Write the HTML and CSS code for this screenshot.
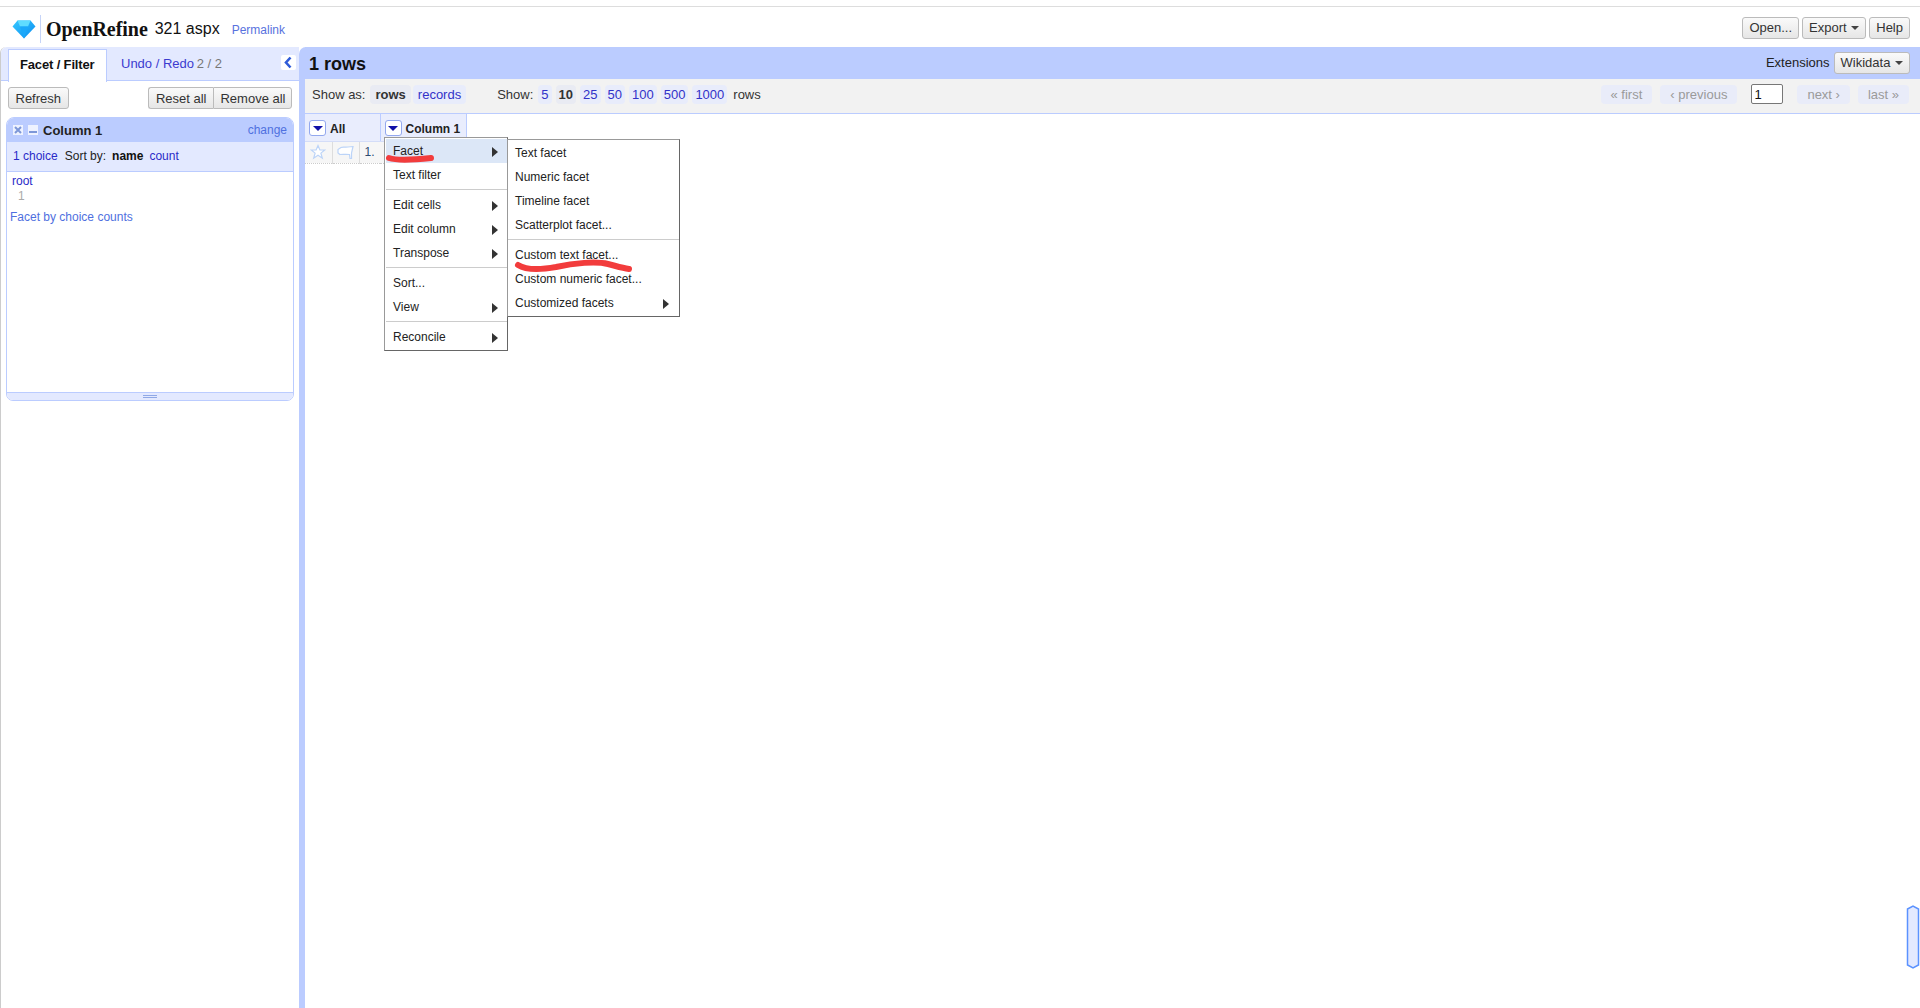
FILE: index.html
```html
<!DOCTYPE html>
<html lang="en">
<head>
<meta charset="utf-8">
<title>321 aspx - OpenRefine</title>
<link rel="stylesheet" href="styles.css">
</head>
<body>
<div class="app">
  <header class="header">
    <svg class="logo" width="24" height="19" viewBox="0 0 24 19"><defs><linearGradient id="gem" x1="0" y1="0" x2="1" y2="1"><stop offset="0" stop-color="#35c8ff"/><stop offset="1" stop-color="#0a8cf0"/></linearGradient></defs><path d="M5.5 0.5H18.5L23.5 6.5L12 18.5L0.5 6.5Z" fill="url(#gem)"/><path d="M5.5 0.5L8 6.5H16L18.5 .5Z" fill="#5fdcff"/><path d="M8 6.5L12 18.5L16 6.5Z" fill="#1ba8fa"/></svg>
    <div class="brand">OpenRefine</div>
    <div class="project">321 aspx</div>
    <a class="permalink">Permalink</a>
    <div class="header-buttons">
      <button class="btn">Open...</button>
      <button class="btn">Export <span class="caret"></span></button>
      <button class="btn">Help</button>
    </div>
  </header>
  <div class="main">
    <aside class="left">
      <div class="tabs">
        <div class="tab active">Facet / Filter</div>
        <div class="tab"><a class="tab-link">Undo / Redo</a> <span class="count">2 / 2</span></div>
        <div class="collapse"><svg width="15" height="15" viewBox="0 0 15 15"><path d="M9.5 2.5L5 7.5L9.5 12.5" fill="none" stroke="#2f5bd8" stroke-width="2.6"/></svg></div>
      </div>
      <div class="toolbar">
        <button class="btn">Refresh</button>
        <div class="btn-group">
          <button class="btn">Reset all</button>
          <button class="btn">Remove all</button>
        </div>
      </div>
      <section class="facet">
        <div class="facet-title">
          <svg class="facet-icon" width="10" height="10" viewBox="0 0 10 10"><rect width="10" height="10" fill="#eef2ff"/><path d="M2 2L8 8M8 2L2 8" stroke="#7d97d8" stroke-width="2"/></svg>
          <svg class="facet-icon" width="10" height="10" viewBox="0 0 10 10"><rect width="10" height="10" fill="#eef2ff"/><rect x="1" y="6" width="8" height="2" fill="#7d97d8"/></svg>
          <span class="facet-name">Column 1</span>
          <a class="change">change</a>
        </div>
        <div class="facet-controls">
          <a class="action">1 choice</a>
          <span class="sort-label">Sort by:</span>
          <b class="sort-on">name</b>
          <a class="action">count</a>
        </div>
        <div class="facet-body">
          <a class="action choice">root</a>
          <div class="choice-count">1</div>
          <a class="facet-by">Facet by choice counts</a>
        </div>
        <div class="facet-foot"><span class="grip"></span></div>
      </section>
    </aside>
    <main class="right">
      <div class="summary">
        <h1 class="rows-title">1 rows</h1>
        <div class="extensions">
          <span>Extensions</span>
          <button class="btn">Wikidata <span class="caret"></span></button>
        </div>
      </div>
      <div class="viewbar">
        <span class="label">Show as:</span>
        <b class="chip current wide">rows</b>
        <a class="chip wide">records</a>
        <span class="label show">Show:</span>
        <a class="chip">5</a>
        <b class="chip current">10</b>
        <a class="chip">25</a>
        <a class="chip">50</a>
        <a class="chip">100</a>
        <a class="chip">500</a>
        <a class="chip">1000</a>
        <span class="label rows-word">rows</span>
        <div class="pager">
          <span class="page">« first</span>
          <span class="page">‹ previous</span>
          <input class="page-input" value="1" aria-label="Page">
          <span class="page">next ›</span>
          <span class="page">last »</span>
        </div>
      </div>
      <table class="grid">
        <colgroup><col class="c-star"><col class="c-flag"><col class="c-idx"><col class="c-col"></colgroup>
        <thead>
          <tr>
            <th colspan="3"><span class="drop"><i></i></span>All</th>
            <th><span class="drop"><i></i></span>Column 1</th>
          </tr>
        </thead>
        <tbody>
          <tr>
            <td class="ico"><svg width="16" height="16" viewBox="0 0 16 16"><path d="M8 1.5L9.9 6H14.8L10.9 9.1L12.3 14.2L8 11.3L3.7 14.2L5.1 9.1L1.2 6H6.1Z" fill="#fff" stroke="#bcd4f8" stroke-width="1.2"/></svg></td>
            <td class="ico"><svg width="17" height="15" viewBox="0 0 17 15"><path d="M1 4.5L4 2.5C6 1.5 8 2.5 11 2C13 1.7 14.5 1.5 16 1.5L14.5 8V13.5H13L12.5 9.5C9 9.5 6 9 3 9.5L1 8Z" fill="#fff" stroke="#bcd4f8" stroke-width="1.2"/></svg></td>
            <td class="idx">1.</td>
            <td></td>
          </tr>
        </tbody>
      </table>
    </main>
  </div>

  <nav class="menu menu-main">
    <div class="item on">Facet<span class="arrow"></span></div>
    <div class="item">Text filter</div>
    <div class="sep"></div>
    <div class="item">Edit cells<span class="arrow"></span></div>
    <div class="item">Edit column<span class="arrow"></span></div>
    <div class="item">Transpose<span class="arrow"></span></div>
    <div class="sep"></div>
    <div class="item">Sort...</div>
    <div class="item">View<span class="arrow"></span></div>
    <div class="sep"></div>
    <div class="item">Reconcile<span class="arrow"></span></div>
  </nav>
  <nav class="menu menu-sub">
    <div class="item">Text facet</div>
    <div class="item">Numeric facet</div>
    <div class="item">Timeline facet</div>
    <div class="item">Scatterplot facet...</div>
    <div class="sep"></div>
    <div class="item">Custom text facet...</div>
    <div class="item">Custom numeric facet...</div>
    <div class="item">Customized facets<span class="arrow"></span></div>
  </nav>

  <svg class="scribble" width="1920" height="1008" viewBox="0 0 1920 1008">
    <path d="M389 158C398 161 412 160 431 158" fill="none" stroke="#f23c3c" stroke-width="6" stroke-linecap="round"/>
    <path d="M518 265C526 270 540 270 556 267C574 263 596 261 608 264C616 266 622 268 629 269" fill="none" stroke="#f23c3c" stroke-width="6" stroke-linecap="round"/>
  </svg>
  <svg class="float-handle" width="14" height="64" viewBox="0 0 14 64"><path d="M1.5 4L7 1L12.5 4V60L7 63L1.5 60Z" fill="#e3e9ff" stroke="#5b92ff" stroke-width="1.5"/></svg>
</div>
</body>
</html>
```
FILE: styles.css
```css
* { box-sizing: border-box; }
html, body { margin: 0; padding: 0; background: #fff; }
body { font: 12px "Liberation Sans", Arial, sans-serif; color: #222; overflow: hidden; }
a { cursor: pointer; }

.app { position: relative; width: 1920px; height: 1008px; display: flex; flex-direction: column; overflow: hidden; padding-top: 6px; }

.header { height: 41px; border-top: 1px solid #ddd; display: flex; align-items: center; padding: 4px 10px 0 12px; flex: none; }
.logo { flex: none; }
.brand { margin-left: 4px; padding-left: 5px; height: 28px; line-height: 28px; border-left: 1px solid #c6d4f8; font: bold 20px/28px "Liberation Serif", serif; color: #111; letter-spacing: -.05px; }
.project { margin-left: 7px; font-size: 16px; color: #111; }
.permalink { margin-left: 12px; color: #5872de; font-size: 12px; padding-top: 2px; }
.header-buttons { margin-left: auto; display: flex; gap: 3px; margin-top: -3px; }

.btn { height: 22px; padding: 0 6px; border: 1px solid #bbb; border-radius: 3px; background: linear-gradient(#fafafa, #e6e6e6); font: 13px "Liberation Sans", Arial, sans-serif; color: #333; white-space: nowrap; }
.caret { display: inline-block; margin-left: 1px; vertical-align: 2px; border: 4px solid transparent; border-top-color: #444; border-bottom-width: 0; }

.main { flex: 1; display: flex; min-height: 0; }

.left { width: 299px; flex: none; border-left: 1px solid #ccc; border-top-left-radius: 6px; }
.tabs { height: 34px; position: relative; display: flex; background: #e3e9ff; border-bottom: 1px solid #bbccff; border-top-left-radius: 6px; padding: 2px 0 0 7px; font-size: 13px; }
.tab { height: 32px; line-height: 30px; padding: 0 11px 0 14px; color: #777; }
.tab.active { height: 33px; width: 99px; padding-left: 11px; background: #fff; border: 1px solid #bbccff; border-bottom: 0; color: #111; font-weight: bold; white-space: nowrap; letter-spacing: -.15px; }
.tab-link { color: #3b3bcf; }
.count { margin-left: -1px; color: #777; }
.collapse { position: absolute; right: 3px; top: 8px; width: 15px; height: 15px; background: #fff; border-radius: 2px; }

.toolbar { display: flex; justify-content: space-between; padding: 6px 7px 0 7px; }
.btn-group { display: flex; }
.btn-group .btn:first-child { border-radius: 3px 0 0 3px; border-right: 0; }
.btn-group .btn:last-child { border-radius: 0 3px 3px 0; padding: 0 5.5px 0 6.5px; }
.toolbar .btn { padding: 0 6.5px; }

.facet { width: 288px; height: 284px; margin: 8px 0 0 5px; border: 1px solid #bbccff; border-radius: 8px 8px 7px 7px; display: flex; flex-direction: column; overflow: hidden; }
.facet-title { height: 24px; flex: none; background: #bbccff; display: flex; align-items: center; padding: 0 6px 0 6px; }
.facet-icon { margin-right: 5px; flex: none; }
.facet-name { font-weight: bold; font-size: 13px; color: #222; }
.change { margin-left: auto; color: #4f70e0; }
.facet-controls { height: 30px; flex: none; background: #e3e9ff; border-bottom: 1px solid #bbccff; display: flex; align-items: center; padding: 0 0 2px 6px; }
.action { color: #2a2ac8; }
.sort-label { margin-left: 7px; color: #222; }
.sort-on { margin-left: 6px; color: #111; }
.facet-controls .action:last-child { margin-left: 6px; }
.facet-body { flex: 1; padding: 2px 4px; display: flex; flex-direction: column; align-items: flex-start; }
.choice { margin-left: 1px; line-height: 15px; }
.choice-count { margin-left: 7px; line-height: 15px; color: #aaa; }
.facet-by { margin: 6px 0 0 -1px; line-height: 14px; color: #4f70e0; }
.facet-foot { height: 8px; flex: none; background: #e3e9ff; border-top: 1px solid #bbccff; display: flex; justify-content: center; align-items: center; }
.grip { display: block; width: 14px; height: 3px; border-top: 1px solid #8fa8e6; border-bottom: 1px solid #8fa8e6; }

.right { flex: 1; min-width: 0; border-left: 6px solid #bbccff; border-top-left-radius: 7px; }
.summary { height: 32px; background: #bbccff; display: flex; align-items: center; justify-content: space-between; padding: 2px 10px 0 4px; }
.rows-title { margin: 0; font-size: 18px; font-weight: bold; color: #111; }
.extensions { display: flex; align-items: center; gap: 4px; font-size: 13px; color: #222; margin-top: -3px; }
.viewbar { height: 35px; background: #f2f2f2; border-bottom: 1px solid #bbccff; display: flex; align-items: center; padding: 0 11px 4px 7px; font-size: 13px; }
.label { color: #333; }
.chip { height: 19px; line-height: 19px; padding: 0 3px; margin-right: 4px; border-radius: 4px; background: #e8ecfb; color: #3232c8; }
.chip.wide { padding: 0 5px; margin-right: 2px; }
.chip.current { color: #333; font-weight: bold; background: #e9ebf3; }
.label + .chip { margin-left: 5px; }
.label.show { margin-left: 29px; }
.rows-word { margin-left: 2px; }
.pager { margin-left: auto; display: flex; align-items: center; gap: 8px; }
.page { height: 19px; line-height: 19px; padding: 0 10px; border-radius: 4px; background: #e9ecf9; color: #9a9a9a; }
.page-input { width: 32px; height: 20px; margin: 0 6px; padding: 0 2px; border: 1px solid #777; border-radius: 2px; font: 13px "Liberation Sans", Arial, sans-serif; color: #111; background: #fff; }

.grid { border-collapse: collapse; table-layout: fixed; width: 161px; }
.c-star, .c-flag { width: 27px; }
.c-idx { width: 21px; }
.c-col { width: 86px; }
.grid th { height: 27px; padding: 4px 0 0 4px; background: #e9edfd; border-right: 1px solid #bbccff; border-bottom: 1px solid #d4ddf8; text-align: left; font-size: 12px; font-weight: bold; color: #222; white-space: nowrap; }
.drop { display: inline-flex; align-items: center; justify-content: center; width: 17px; height: 16px; margin: -3px 4px 0 0; vertical-align: middle; background: #fff; border: 1px solid #93a8ee; border-radius: 3px; }
.drop i { display: block; border: 5px solid transparent; border-top: 5px solid #1111a8; border-bottom: 0; }
.grid td { height: 22px; padding: 0; background: #f6f6f6; border-right: 1px solid #ddd; border-bottom: 1px dotted #ccc; }
.grid td.ico { text-align: center; }
.grid td.ico svg { display: block; margin: 0 auto; }
.grid td.idx { padding-left: 5px; color: #2b4a72; border-right: 0; }

.menu { position: absolute; background: #fff; border: 1px solid #999; border-right-color: #666; border-bottom-color: #666; font-size: 12px; color: #222; }
.item { position: relative; height: 24px; line-height: 24px; padding-left: 7px; white-space: nowrap; }
.item.on { background: #dce7f7; }
.arrow { position: absolute; right: 9px; top: 8px; border-left: 6px solid #333; border-top: 5px solid transparent; border-bottom: 5px solid transparent; }
.sep { height: 1px; margin: 2px 0 3px; background: #ccc; }
.menu-main { left: 384px; top: 137px; width: 124px; height: 214px; padding: 1px 0 0 1px; }
.menu-sub { left: 507px; top: 139px; width: 173px; height: 178px; padding: 1px 0 0 0; }
.menu-sub .item { padding-left: 7px; }
.menu-sub .arrow { right: 10px; }

.scribble { position: absolute; left: 0; top: 0; pointer-events: none; }
.float-handle { position: absolute; left: 1906px; top: 905px; }
```
